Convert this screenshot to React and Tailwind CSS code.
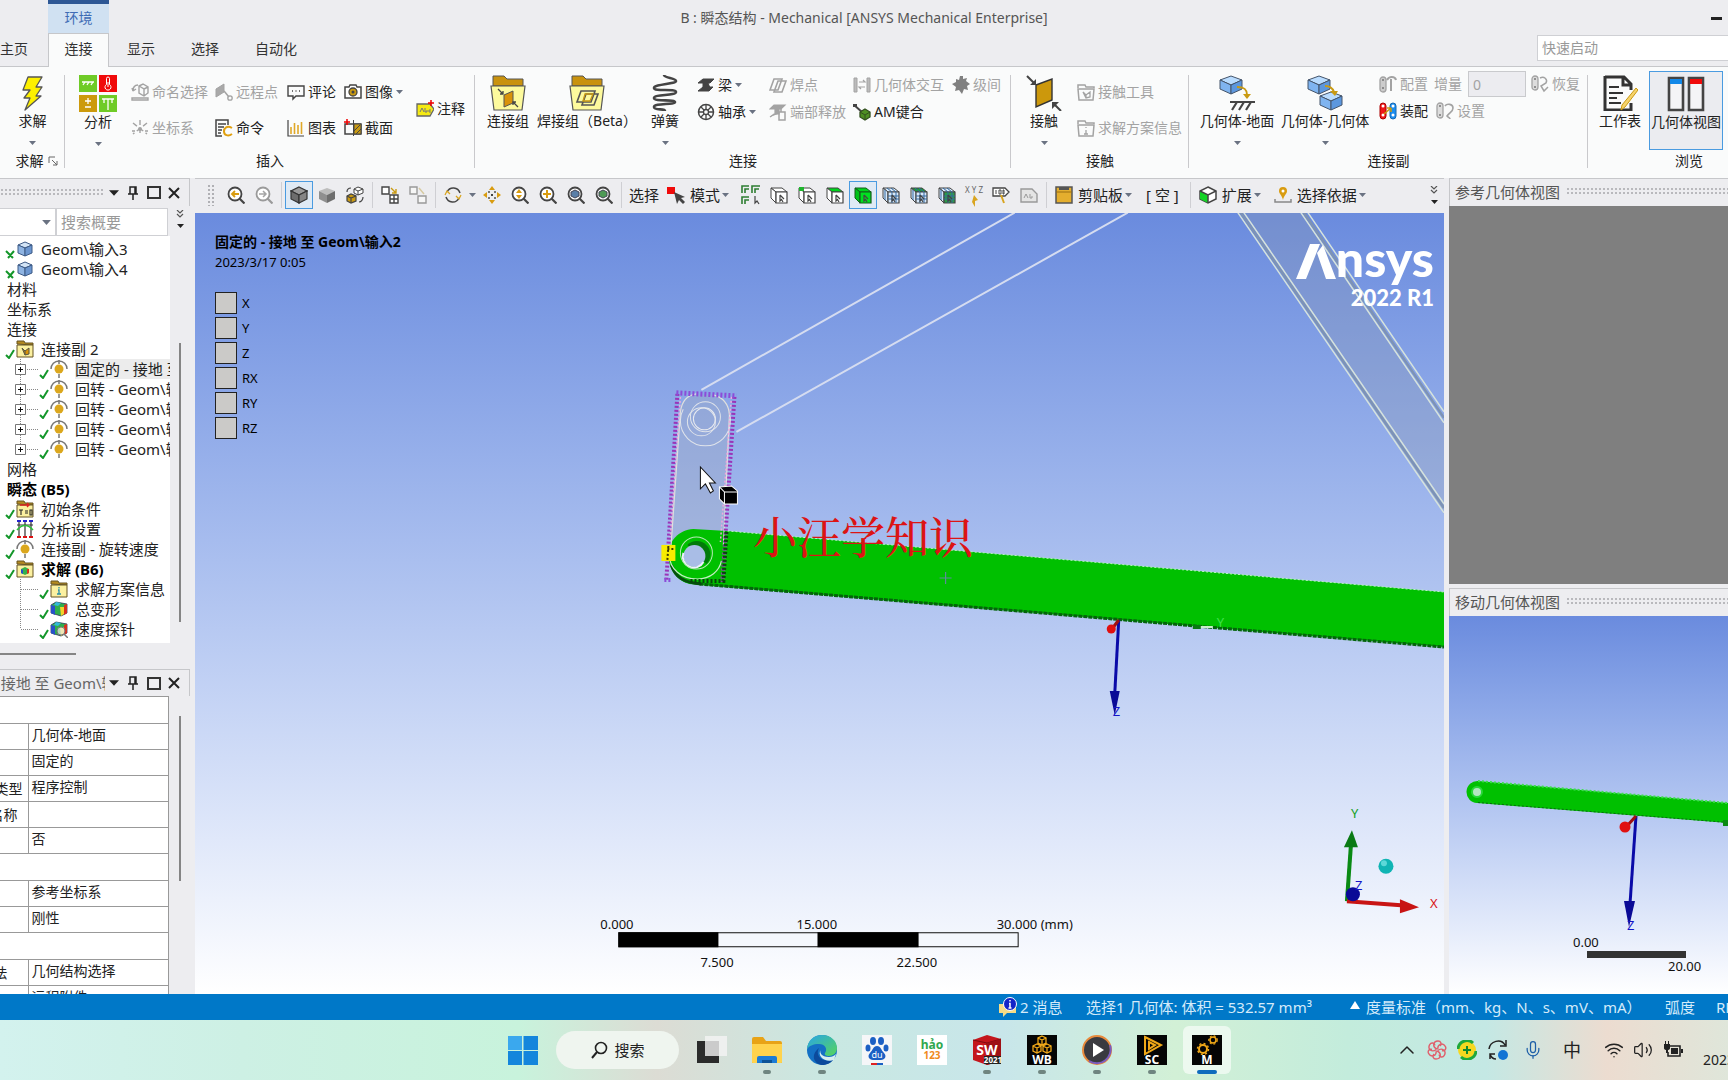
import React, { useState } from 'react';
import clsx from 'clsx';
import { ChevronUp, Mic, Wifi, Volume2 } from 'lucide-react';

const DARK = '#444444';
const GREY = '#a3a3a3';
const GOLD = '#c99a12';

const Svg = ({ size = 18, box = 18, children, className }) => (
  <svg width={size} height={size} viewBox={`0 0 ${box} ${box}`} fill="none" className={clsx('shrink-0', className)} aria-hidden="true">
    {children}
  </svg>
);

const Caret = ({ className }) => (
  <svg width="7" height="4" viewBox="0 0 7 4" className={clsx('shrink-0', className)} aria-hidden="true">
    <path d="M0 0h7L3.5 4z" fill="currentColor" />
  </svg>
);

/* ---------- large ribbon icons (36 x 36) ---------- */

const SolveIcon = () => (
  <Svg size={36} box={36}>
    <path d="M13 2h14l-6 10h6l-6 9h5L10 35l5-12h-6l6-8H8z" fill="#fdf000" stroke="#555" strokeWidth="1.3" strokeLinejoin="round" />
  </Svg>
);

const AnalysisIcon = () => (
  <svg width="38" height="37" viewBox="0 0 38 37" fill="none" aria-hidden="true">
    <rect width="18" height="17" fill="#6fcb27" />
    <rect x="20" width="18" height="17" fill="#f00a0a" />
    <rect y="20" width="18" height="17" fill="#cc9a0c" />
    <rect x="20" y="20" width="18" height="17" fill="#6fcb27" />
    <path d="M3 7h12M4 10l2-3M8 10l2-3M12 10l2-3M9 23v6M6 26h6M6 32h6M29 24v11M23 24h12M25 24v4M33 24v4" stroke="#fff" strokeWidth="1.3" />
    <path d="M27.500 3.500a1.500 1.500 0 0 1 3 0v6a3 3 0 1 1-3 0z" stroke="#fff" />
    <path d="M29 7v5" stroke="#fff" />
  </svg>
);

const FolderBase = ({ children }) => (
  <Svg size={36} box={36}>
    <path d="M3 11V1h11l3 3h16v7z" fill="#c9920e" stroke="#555" strokeWidth="1" />
    <path d="M1 11h34l-3 24H4z" fill="#fdfa9d" stroke="#555" strokeWidth="1.2" />
    {children}
  </Svg>
);

const ConnGroupIcon = () => (
  <FolderBase>
    <path d="M14 20l9-4v12l-9 4z" fill="#d9930a" stroke="#555" />
    <path d="M8 14l5 5m0-3v3h-3M28 32l-5-5m0 3v-3h3" stroke="#444" strokeWidth="1.3" />
  </FolderBase>
);

const WeldGroupIcon = () => (
  <FolderBase>
    <path d="M12 16h14l-4 11H8zM17 19h12l-4 11H13z" stroke="#555" strokeWidth="1.6" />
    <path d="M16 19h8l-3 7h-7z" stroke={GOLD} strokeWidth="1.3" />
  </FolderBase>
);

const SpringIcon = () => (
  <Svg size={36} box={36}>
    <path d="M17 0c0 3 12 3 12 6S7 9 7 13s22 0 22 4-22 2-22 6 21 1 21 4-21 1-21 5 11 1 11 4" stroke={DARK} strokeWidth="2.6" strokeLinecap="round" />
  </Svg>
);

const ContactIcon = () => (
  <Svg size={36} box={36}>
    <path d="M10 10l16-6v21l-16 7z" fill="#cc980c" stroke="#333" strokeWidth="1.4" />
    <path d="M1 1l8 8M35 36l-8-8" stroke={DARK} strokeWidth="2" />
    <path d="M10 10V4L4 10zM26 27v7l7-7z" fill={DARK} />
  </Svg>
);

const BlueCube = ({ x, y }) => (
  <g transform={`translate(${x} ${y})`} stroke="#44546a" strokeWidth="1" strokeLinejoin="round">
    <path d="M11 0l11 4-11 5L0 4z" fill="#b9dcff" />
    <path d="M0 4l11 5v9L0 13z" fill="#7fb4f0" />
    <path d="M22 4L11 9v9l11-5z" fill="#5c97de" />
  </g>
);

const BodyGroundIcon = () => (
  <Svg size={36} box={36}>
    <BlueCube x={1} y={1} />
    <path d="M18 12c8 0 10 3 10 8" stroke={GOLD} strokeWidth="2" />
    <path d="M24 19h8l-4 5z" fill={GOLD} />
    <path d="M11 27h25M18 27l-5 8M25 27l-5 8M32 27l-5 8" stroke={DARK} strokeWidth="2.2" />
  </Svg>
);

const BodyBodyIcon = () => (
  <Svg size={36} box={36}>
    <BlueCube x={1} y={1} />
    <BlueCube x={13} y={17} />
    <path d="M18 11c6 0 8 3 9 6" stroke={GOLD} strokeWidth="2" />
    <path d="M23 16h8l-3 5z" fill={GOLD} />
  </Svg>
);

const WorksheetIcon = () => (
  <Svg size={36} box={36}>
    <path d="M3 2h19l7 7v6M3 1v34h26v-7M21 2v8h8" stroke="#333" strokeWidth="3" />
    <path d="M7 12h10M7 18h14M7 23h8M7 28h12" stroke="#333" strokeWidth="2" />
    <path d="M34 13l2 2-13 17-4 3 1-5z" fill="#f6d36b" stroke={GOLD} />
  </Svg>
);

const BodyViewIcon = () => (
  <svg width="38" height="36" viewBox="0 0 38 36" fill="none" aria-hidden="true">
    <path d="M2 2h14v32H2zM22 2h14v32H22z" fill="#f4f4f6" stroke={DARK} strokeWidth="2.600" />
    <path d="M3 3h12v5H3z" fill="#1288e8" />
    <path d="M23 3h12v5H23z" fill="#f00a0a" />
  </svg>
);

/* ---------- small ribbon icons (18 x 18) ---------- */

const small = {
  named: <Svg><path d="M1 15h16v2H1zM2 8c0-4 2-6 5-6M2 8l-1-3M2 8l3-2" stroke={GREY} strokeWidth="1.400" /><path d="M8 3l4-2 5 3v6l-4 3-5-3z M8 3l5 3v7M13 6l4-2" stroke={GREY} strokeWidth="1.400" /></Svg>,
  csys: <Svg><path d="M9 1v16M2 4l14 11M16 4L2 15M1 12h3M14 12h3" stroke={GREY} strokeWidth="1.400" strokeDasharray="5 3" /><circle cx="9" cy="10" r="2" fill={GREY} /></Svg>,
  remote: <Svg><path d="M1 6l8-5v8l-8 5z" fill="#a9a9a9" stroke={GREY} /><path d="M9 8l5 6" stroke={GREY} strokeWidth="1.500" /><circle cx="15" cy="15" r="2.200" stroke={GREY} strokeWidth="1.300" /></Svg>,
  commands: <Svg><path d="M13 6V1H1v16h6" stroke={DARK} strokeWidth="1.500" /><path d="M3 5h8M3 8h6M3 11h4M3 14h3" stroke={DARK} strokeWidth="1.300" /><path d="M17 9c-5-3-8 0-8 3.500S13 18 17 15" stroke="#e0a010" strokeWidth="2" /></Svg>,
  comment: <Svg><path d="M1 3h16v10H9l-3 3v-3H1z" stroke={DARK} strokeWidth="1.400" /><path d="M5 8h1M8.500 8h1M12 8h1" stroke={DARK} strokeWidth="1.400" /></Svg>,
  chart: <Svg><path d="M1 1v16h16" stroke={DARK} strokeWidth="1.200" /><path d="M4 15V8M7.500 15V4M11 15V6M14.500 15V3" stroke="#e0a828" strokeWidth="1.600" /></Svg>,
  image: <Svg><path d="M1 4h4l1-2h6l1 2h4v11H1z" fill="#fff" stroke={DARK} strokeWidth="1.500" /><circle cx="9" cy="9" r="4" fill={GOLD} stroke={DARK} strokeWidth="1.300" /><circle cx="9" cy="9" r="1.500" fill={DARK} /></Svg>,
  section: <Svg><path d="M1 5h16v10H1z" stroke={DARK} strokeWidth="1.500" /><path d="M10 5h7v10h-7z" fill={GOLD} stroke={DARK} /><path d="M10 12l6-6M12 15l5-5" stroke={DARK} /><path d="M9.500 1v16" stroke={DARK} /><path d="M0 3h6M3 0v6" stroke="#e00" strokeWidth="1.500" /></Svg>,
  note: <Svg><path d="M1 4h13l4 5-4 7H1z" fill="#f5ea12" stroke="#666" strokeWidth="1.300" /><path d="M4 12l2-4 2 4M9 8v4h2v-2M15 10h-2v2h2" stroke="#777" /><path d="M12 3h6M15 0v6" stroke="#e00" strokeWidth="1.500" /></Svg>,
  beam: <Svg><path d="M1 7l5-4h11l-4 4zM1 15l5-4h10l-4 4zM6 7h5l2 5-7 0z" fill={DARK} stroke={DARK} /></Svg>,
  bearing: <Svg><circle cx="9" cy="9" r="7.500" stroke={DARK} strokeWidth="1.500" /><circle cx="9" cy="9" r="2.500" stroke={DARK} strokeWidth="1.300" /><path d="M9 1.500v5M9 11.500v5M1.500 9h5M11.500 9h5M4 4l3 3M11 11l3 3M14 4l-3 3M4 14l3-3" stroke={DARK} strokeWidth="1.300" /></Svg>,
  weld: <Svg><path d="M5 3h8l-4 11H1zM9 5h8l-4 11H5z" stroke={GREY} strokeWidth="1.600" /></Svg>,
  release: <Svg><path d="M1 6l4-4h11l-4 4zM1 14l4-3h4M6 6h4v5H6z" fill={GREY} stroke={GREY} strokeWidth="1.200" /><path d="M10 9h6v8h-6zM12 6v3" stroke={GREY} strokeWidth="1.500" /></Svg>,
  interact: <Svg><path d="M1 2h3v14H1zM14 2h3v14h-3z" fill="#bbb" stroke={GREY} /><path d="M6 6h6l-2-2M12 11H6l2 2" stroke={GREY} strokeWidth="1.200" /></Svg>,
  bond: <Svg><path d="M1 2l8 7" stroke={DARK} strokeWidth="2" /><path d="M0 1h4v3H0z" fill={DARK} /><path d="M12 6l5 3v5l-5 3-5-3V9z" fill="#4e8f22" stroke="#33501f" strokeWidth="1.300" /><path d="M7 9l5 3 5-3M12 12v5" stroke="#33501f" /></Svg>,
  stage: <Svg><path d="M8 0h3v3l4-1-1 3 4 3-3 2 1 4-4-1-2 5-3-4-4 1 1-4-4-3 4-2V3l3 1z" fill="#808080" /></Svg>,
  contactTool: <Svg><path d="M1 5V2h7l1 2h8v1M1 6h16l-1 11H2z" stroke={GREY} strokeWidth="1.500" /><path d="M6 9l3 3 4-3v5l-4 1zM9 12v3" stroke={GREY} strokeWidth="1.300" /></Svg>,
  solInfo: <Svg><path d="M1 5V2h7l1 2h8v1M1 6h16l-1 11H2z" stroke={GREY} strokeWidth="1.500" /><path d="M9 8v1M9 11v4M7 15h4" stroke={GREY} strokeWidth="1.300" /></Svg>,
  configure: <Svg><rect x="1" y="2" width="6" height="15" rx="3" fill="#ccc" stroke={GREY} strokeWidth="1.300" /><circle cx="4" cy="5" r="1" fill="#777" /><circle cx="4" cy="13" r="1" fill="#777" /><path d="M8 5c2-4 8-4 9 0M12 4v12" stroke={GREY} strokeWidth="2" /></Svg>,
  revert: <Svg><rect x="1" y="1" width="6" height="14" rx="3" fill="#ddd" stroke={GREY} strokeWidth="1.300" /><circle cx="4" cy="4" r="1" fill="#777" /><circle cx="4" cy="12" r="1" fill="#777" /><path d="M9 3c4-2 8 1 6 5l-5 3 3 5 4-4" stroke={GREY} strokeWidth="1.500" /></Svg>,
  assemble: <Svg><rect x="1" y="1" width="6" height="16" rx="3" fill="#f01818" stroke="#a00" /><rect x="11" y="1" width="6" height="16" rx="3" fill="#1b8df0" stroke="#1469b4" /><circle cx="4" cy="4" r="1.500" fill="#fff" /><circle cx="4" cy="13" r="1.500" fill="#fff" /><circle cx="14" cy="4" r="1.500" fill="#fff" /><circle cx="14" cy="13" r="1.500" fill="#fff" /><path d="M5 12l7-6M12 6H8M12 6v4" stroke={GOLD} strokeWidth="1.600" /></Svg>,
  set: <Svg><rect x="1" y="1" width="6" height="15" rx="3" fill="#ddd" stroke={GREY} strokeWidth="1.300" /><circle cx="4" cy="4" r="1" fill="#777" /><circle cx="4" cy="13" r="1" fill="#777" /><path d="M9 4c2-3 8-2 8 2s-3 4-6 8c2 2 3 2 3 3" stroke={GREY} strokeWidth="1.600" /></Svg>,
};

/* ---------- graphics toolbar icons ---------- */

const Lens = ({ color = DARK, children }) => (
  <Svg>
    <circle cx="8" cy="8" r="6.500" fill="#fff" stroke={color} strokeWidth="1.800" />
    <path d="M12.500 12.500l5 5" stroke={color} strokeWidth="2.200" />
    {children}
  </Svg>
);

const PickCube = ({ top = '#fff', front = '#fff', side = '#fff', corner, grid, stroke = DARK }) => (
  <Svg>
    <path d="M1 2h11l5 4H6z" fill={top} stroke={stroke} strokeLinejoin="round" />
    <path d="M1 2v10l5 5V6z" fill={side} stroke={stroke} strokeLinejoin="round" />
    <path d="M6 6h11v11H6z" fill={front} stroke={stroke} strokeWidth="1.200" />
    {grid && <path d="M10 6v11M14 6v11M6 10h11M6 13h11M3 4v10M5 2l5 4M9 2l5 4" stroke="#34689e" />}
    {corner && <path d="M1 1h5v4H1z" fill="#1fb52e" />}
    <path d="M10 9v6l1.500-1.500L13 16M10 9l4 4" stroke={DARK} strokeWidth="1.200" />
  </Svg>
);

const tools = {
  back: <Lens><path d="M12 8H5M8 5L5 8l3 3" stroke="#d99c10" strokeWidth="1.800" /></Lens>,
  forward: <Lens color="#9a9a9a"><path d="M4 8h7M8 5l3 3-3 3" stroke="#a5a5a5" strokeWidth="1.500" /></Lens>,
  cube: <Svg><path d="M9 1l8 4-8 4-8-4z" fill="#999" stroke="#333" strokeWidth="1.200" /><path d="M1 5l8 4v8l-8-4z" fill="#6d6d6d" stroke="#333" strokeWidth="1.200" /><path d="M17 5L9 9v8l8-4z" fill="#858585" stroke="#333" strokeWidth="1.200" /></Svg>,
  solid: <Svg><path d="M9 2l8 3-8 4-8-4z" fill="#bdbdbd" /><path d="M1 5l8 4v8l-8-4z" fill="#8f8f8f" /><path d="M17 5L9 9v8l8-4z" fill="#6e6e6e" /></Svg>,
  swap: <Svg><path d="M8 3l4-2 5 2v4l-5 2-4-2zM8 3l4 2v4M12 5l5-2" stroke={DARK} fill="#fff" /><path d="M1 10l4-2 5 2v5l-5 2-4-2z" fill={GOLD} stroke={DARK} strokeWidth="1.200" /><path d="M1 10l4 2v5M5 12l5-2M1 6c0-3 2-4 4-4M17 11c0 3-2 5-4 5" stroke={DARK} strokeWidth="1.200" /></Svg>,
  expand: <Svg><path d="M1 1h7v7H1zM9 9h8v8H9zM13 9v8M9 13h8" stroke={DARK} strokeWidth="1.400" fill="#fff" /><path d="M10 2l5 5M15 3v4h-4" stroke={GOLD} strokeWidth="1.400" /></Svg>,
  collapse: <Svg><path d="M1 1h7v7H1zM9 10h8v7H9z" stroke="#999" strokeWidth="1.400" fill="#f6f6f6" /><path d="M10 2l5 6" stroke="#d6c9a0" strokeWidth="1.400" /></Svg>,
  rotate: <Svg><path d="M3 6c3-6 11-5 13 1M15 12c-3 6-11 5-13-1" stroke={DARK} strokeWidth="1.500" /><path d="M1 9l2-4 3 3M17 9l-2 4-3-3" stroke="#d9a520" strokeWidth="1.300" /></Svg>,
  pan: <Svg><path d="M9 0l3 4H6zM9 18l3-4H6zM0 9l4-3v6zM18 9l-4-3v6z" fill="#d99c10" /><path d="M8 8h2v2H8z" fill={DARK} /><path d="M5 5h2v2H5zM11 5h2v2h-2zM5 11h2v2H5zM11 11h2v2h-2z" fill="#777" /></Svg>,
  zoom: <Lens><path d="M8 3l3 4H5zM8 13l3-4H5z" fill="#d99c10" /></Lens>,
  zoomIn: <Lens><path d="M4 8h8M8 4v8" stroke="#d99c10" strokeWidth="2" /></Lens>,
  zoomFit: <Lens><path d="M8 4l4 2v4l-4 2-4-2V6z" fill="#5a7fa8" stroke="#445" /></Lens>,
  zoomSel: <Lens><path d="M8 4l4 2v4l-4 2-4-2V6z" fill="#4e9a55" stroke="#445" /></Lens>,
  mode: <Svg><path d="M0 1h8v7H0z" fill="#f00a0a" /><path d="M7 6l11 5-4 1 4 4-2 2-4-4-2 4z" fill={DARK} /></Svg>,
  pickType: <Svg size={20} box={20}><path d="M1 8V1h7M4 8V4h4M11 8V1h8M14 8V4h4M1 19v-7h7M4 19v-4h4" stroke="#2e7d32" strokeWidth="1.600" /><path d="M14 11v7l2-2 2 3" stroke={DARK} strokeWidth="1.200" /></Svg>,
  vertex: <PickCube />,
  edge: <PickCube corner />,
  face: <PickCube top="#00d41c" />,
  body: <PickCube top="#00d41c" front="#00e020" side="#00c31a" stroke="#135c1a" />,
  node: <PickCube front="#d6e8fa" side="#d6e8fa" top="#d6e8fa" grid />,
  elemFace: <PickCube front="#d6e8fa" side="#d6e8fa" top="#1f9a3a" grid />,
  elem: <PickCube front="#2c9a4a" side="#d6e8fa" top="#d6e8fa" grid />,
  tag: <Svg><path d="M1 2h12l4 4-4 4H1z" fill="#fff" stroke={DARK} strokeWidth="1.300" /><path d="M4 4v4M7 4h2v4H7zM11 4h1v4h-1z" stroke={DARK} /><path d="M9 9l3 8" stroke="#d9a520" strokeWidth="2" /></Svg>,
  label: <Svg><path d="M1 3h11l5 5v8H1z" fill="#e4e4e4" stroke="#999" strokeWidth="1.400" /><path d="M4 12l2-4 2 4M10 8v4h2v-2" stroke="#999" /></Svg>,
  clipboard: <Svg><path d="M1 1h16v16H1z" fill="#e4ae2e" stroke="#555" strokeWidth="1.500" /><path d="M4 1h10v3H4z" fill="#555" /><path d="M1 6h16" stroke="#9a6f10" /></Svg>,
  extend: <Svg><path d="M9 1l8 4v8l-8 4-8-4V5z" fill="#fff" stroke={DARK} strokeWidth="1.500" /><path d="M1 5l8 4v8l-8-4z" fill="#14d326" /><path d="M1 5l8 4 8-4M9 9v8" stroke={DARK} strokeWidth="1.500" /></Svg>,
  pin: <Svg><path d="M9 1a4 4 0 0 1 4 4c0 3-3 4-4 9-1-5-4-6-4-9a4 4 0 0 1 4-4z" fill="#d99c10" /><circle cx="9" cy="5" r="1.500" fill="#fff" /><path d="M1 13v3h16v-3" stroke="#888" strokeWidth="1.500" /></Svg>,
};

/* ---------- ribbon ---------- */

const BigButton = ({ icon, label, width, caret, disabled, active }) => (
  <button
    type="button"
    disabled={disabled}
    className={clsx('flex flex-col items-center shrink-0 whitespace-nowrap', width, active ? 'mt-1 h-[79px] border border-[#4a9be0] bg-[#ebecf0] pt-1' : 'pt-2')}
  >
    {icon}
    <span className="leading-5">{label}</span>
    {caret && <Caret className="mt-[10px] text-gray-500" />}
  </button>
);

const SmallButton = ({ icon, label, disabled, caret }) => (
  <button type="button" disabled={disabled} className={clsx('flex items-center gap-[3px] h-5 leading-5 whitespace-nowrap', disabled && 'text-[#a3a3a3]')}>
    {icon}
    {label}
    {caret && <Caret className="text-gray-500" />}
  </button>
);

const RibbonGroup = ({ label, width, launcher, children }) => (
  <section className={clsx('relative flex flex-col shrink-0', width)}>
    <div className="flex flex-1">{children}</div>
    <div className="h-5 mb-[7px] leading-5 flex justify-center items-center">
      {label}
      {launcher && (
        <Svg size={10} box={10} className="ml-1 -mr-2">
          <path d="M1 7V1h6M4 4l5 5M9 5v4H5" stroke="#666" />
        </Svg>
      )}
    </div>
    <span className="absolute right-0 top-2 bottom-[10px] w-px bg-[#c9c9cc]" />
  </section>
);

const Ribbon = () => (
  <div className="flex h-[112px] bg-[#fafbfb] border-t border-[#c6c7ca] text-sm overflow-hidden shrink-0">
    <RibbonGroup label="求解" width="w-[65px]" launcher>
      <BigButton icon={<SolveIcon />} label="求解" width="w-[65px]" caret />
    </RibbonGroup>
    <RibbonGroup label="插入" width="w-[410px]">
      <BigButton icon={<AnalysisIcon />} label="分析" width="w-[66px]" caret />
      <div className="flex flex-col gap-4 pt-[15px] w-[84px]">
        <SmallButton icon={small.named} label="命名选择" disabled />
        <SmallButton icon={small.csys} label="坐标系" disabled />
      </div>
      <div className="flex flex-col gap-4 pt-[15px] w-[72px]">
        <SmallButton icon={small.remote} label="远程点" disabled />
        <SmallButton icon={small.commands} label="命令" />
      </div>
      <div className="flex flex-col gap-4 pt-[15px] w-[57px]">
        <SmallButton icon={small.comment} label="评论" />
        <SmallButton icon={small.chart} label="图表" />
      </div>
      <div className="flex flex-col gap-4 pt-[15px] w-[72px]">
        <SmallButton icon={small.image} label="图像" caret />
        <SmallButton icon={small.section} label="截面" />
      </div>
      <div className="pt-8">
        <SmallButton icon={small.note} label="注释" />
      </div>
    </RibbonGroup>
    <RibbonGroup label="连接" width="w-[536px]">
      <BigButton icon={<ConnGroupIcon />} label="连接组" width="w-[66px]" />
      <BigButton icon={<WeldGroupIcon />} label="焊接组（Beta）" width="w-[92px]" />
      <BigButton icon={<SpringIcon />} label="弹簧" width="w-[64px]" caret />
      <div className="flex flex-col gap-[7px] pt-2 w-[72px]">
        <SmallButton icon={small.beam} label="梁" caret />
        <SmallButton icon={small.bearing} label="轴承" caret />
      </div>
      <div className="flex flex-col gap-[7px] pt-2 w-[84px]">
        <SmallButton icon={small.weld} label="焊点" disabled />
        <SmallButton icon={small.release} label="端部释放" disabled />
      </div>
      <div className="flex flex-col gap-[7px] pt-2 w-[99px]">
        <SmallButton icon={small.interact} label="几何体交互" disabled />
        <SmallButton icon={small.bond} label="AM键合" />
      </div>
      <div className="pt-2">
        <SmallButton icon={small.stage} label="级间" disabled />
      </div>
    </RibbonGroup>
    <RibbonGroup label="接触" width="w-[178px]">
      <BigButton icon={<ContactIcon />} label="接触" width="w-[66px]" caret />
      <div className="flex flex-col gap-4 pt-[15px]">
        <SmallButton icon={small.contactTool} label="接触工具" disabled />
        <SmallButton icon={small.solInfo} label="求解方案信息" disabled />
      </div>
    </RibbonGroup>
    <RibbonGroup label="连接副" width="w-[399px]">
      <div className="flex pl-1 pr-[10px]">
        <BigButton icon={<BodyGroundIcon />} label="几何体-地面" width="w-[88px]" caret />
        <BigButton icon={<BodyBodyIcon />} label="几何体-几何体" width="w-[88px]" caret />
      </div>
      <div className="flex flex-col gap-px pt-1">
        <div className="flex items-center h-[26px]">
          <SmallButton icon={small.configure} label="配置" disabled />
          <label htmlFor="increment" className="ml-[6px] mr-[6px] leading-5 text-[#a3a3a3]">增量</label>
          <input id="increment" defaultValue="0" disabled className="w-[58px] h-[26px] pl-1 mr-[5px] bg-[#ececf0] border border-[#c9cacd] text-[#a3a3a3]" />
          <SmallButton icon={small.revert} label="恢复" disabled />
        </div>
        <div className="flex items-center h-[26px] gap-2">
          <SmallButton icon={small.assemble} label="装配" />
          <SmallButton icon={small.set} label="设置" disabled />
        </div>
      </div>
    </RibbonGroup>
    <RibbonGroup label="浏览" width="w-[202px]">
      <div className="flex pl-[3px]">
        <BigButton icon={<WorksheetIcon />} label="工作表" width="w-[58px]" />
        <BigButton icon={<BodyViewIcon />} label="几何体视图" width="w-[74px]" active />
      </div>
    </RibbonGroup>
  </div>
);

const TitleBar = () => (
  <header className="relative bg-[#ededf0] shrink-0 text-sm text-[#333]">
    <div className="flex h-[33px]">
      <span className="ml-12 w-[61px] border-t-4 border-[#2d5795] bg-[#d0e1f2] text-[#3f6cb5] text-center leading-7">环境</span>
      <h1 className="absolute inset-x-0 top-2 text-center leading-5 text-[#555]">B : 瞬态结构 - Mechanical [ANSYS Mechanical Enterprise]</h1>
      <button type="button" aria-label="最小化" className="ml-auto mr-[6px] mt-1 self-center w-[11px] h-[3px] bg-[#222]" />
    </div>
    <nav className="flex h-[33px] leading-8">
      <a href="#home" className="w-12">主页</a>
      <a href="#connect" className="w-[61px] -mb-px relative z-10 text-center leading-[30px] bg-[#fafbfb] border border-b-0 border-[#c6c7ca]">连接</a>
      <a href="#display" className="w-[64px] text-center">显示</a>
      <a href="#select" className="w-[64px] text-center">选择</a>
      <a href="#auto" className="w-[78px] text-center">自动化</a>
      <input aria-label="快速启动" placeholder="快速启动" className="ml-auto mt-[2px] w-[191px] h-[26px] pl-1 bg-white border border-r-0 border-[#cfd0d4] placeholder:text-[#999]" />
    </nav>
  </header>
);

/* ---------- docked panels ---------- */

const Dots = () => (
  <span className="flex-1 h-[9px] bg-[radial-gradient(#b9b9bd_1px,transparent_1px)] bg-[size:4px_4px]" />
);

const PanelControls = () => (
  <div className="flex items-center gap-[7px] text-[#222]">
    <button type="button" aria-label="菜单"><Caret className="w-[10px] h-[6px]" /></button>
    <button type="button" aria-label="固定">
      <Svg size={14} box={14}><path d="M4 1h6v7H4zM9 1v7M2 8h10M7 8v6" stroke="#222" strokeWidth="1.500" /></Svg>
    </button>
    <button type="button" aria-label="最大化" className="w-[14px] h-[13px] border-2 border-[#333]" />
    <button type="button" aria-label="关闭">
      <Svg size={12} box={12}><path d="M1 1l10 10M11 1L1 11" stroke="#222" strokeWidth="2" /></Svg>
    </button>
  </div>
);

const Overflow = () => (
  <div className="flex flex-col items-center gap-[6px]">
    <Svg size={8} box={8}><path d="M1 0l3 3 3-3M1 4l3 3 3-3" stroke="#555" strokeWidth="1.200" /></Svg>
    <Caret className="text-[#222]" />
  </div>
);

const TreeIcon = ({ kind }) => {
  if (kind === 'cube') {
    return <Svg><path d="M9 2l7 3-7 3-7-3z" fill="#d3e4f6" stroke="#3d5a85" /><path d="M2 5l7 3v8l-7-3z" fill="#8fb4e2" stroke="#3d5a85" /><path d="M16 5L9 8v8l7-3z" fill="#6b95cf" stroke="#3d5a85" /></Svg>;
  }
  if (kind === 'joint') {
    return <Svg><path d="M1 9a8 8 0 0 1 16 0" stroke="#777" strokeWidth="1.500" /><circle cx="9" cy="9" r="4.500" fill="#dba71d" /><path d="M9 0v4M9 14v4" stroke="#777" strokeWidth="1.500" /></Svg>;
  }
  if (kind === 'settings') {
    return <Svg><path d="M3 1v15M9 1v15M15 1v15M1 5h16" stroke="#333" strokeWidth="1.200" /><path d="M1 1h4M7 1h4M13 1h4" stroke="#2222cc" strokeWidth="2" /><path d="M1 10c5-6 11-6 16 0" stroke="#2dbf3a" strokeWidth="1.500" /><path d="M1 17h4M7 17h4M13 17h4" stroke="#d11" strokeWidth="2" /></Svg>;
  }
  if (kind === 'result' || kind === 'probe') {
    return (
      <Svg>
        <path d="M1 5l5-3 11 2v9l-6 3-10-3z" fill="#2fae4d" stroke="#335" strokeWidth=".8" />
        <path d="M1 5l4 1v9l-4-2z" fill="#2850c8" />
        <path d="M6 2l5 1-3 3-4-1z" fill="#33b8d8" />
        <path d="M10 7l4 0v7l-3 2z" fill="#f3d22a" />
        <path d="M14 5l3-1v9l-3 2z" fill="#d8301e" />
        {kind === 'probe' && <><circle cx="11" cy="11" r="4" fill="#eee" fillOpacity=".7" stroke="#777" /><path d="M14 14l4 4" stroke="#777" strokeWidth="1.500" /></>}
      </Svg>
    );
  }
  return (
    <Svg>
      <path d="M1 4V1h7l1 2h8v2z" fill="#b58a20" stroke="#665522" />
      <path d="M1 5h16v12H1z" fill="#fbf0a0" stroke="#665522" />
      {kind === 'group' && <path d="M6 8l3 3 4-3v6l-4 1zM9 11v4" fill="#d9930a" stroke="#554" />}
      {kind === 'initial' && <><path d="M4 5h9M11 3l2 2-2 2" stroke="#d22" strokeWidth="1.300" /><path d="M3 10h4M5 10v5M9 11h3M9 13h3M14 10h2v5h-2z" stroke="#222" strokeWidth="1.100" /></>}
      {kind === 'solution' && <><path d="M5 9l4-2 4 2v4l-4 2-4-2z" fill="#35b24a" /><path d="M5 9l2 1v4l-2-1z" fill="#2850c8" /><path d="M11 9l2 0v4l-2 1z" fill="#d8301e" /></>}
      {kind === 'info' && <path d="M9 7v1.500M8 10h1v4M7 14h4" stroke="#2a8fa8" strokeWidth="1.300" />}
    </Svg>
  );
};

const Tick = ({ cross }) => (
  <Svg size={10} box={10} className="self-end">
    <path d={cross ? 'M1 2l3 3M9 2L3 9M4 5l4 4' : 'M1 6l3 3 5-8'} stroke="#14962a" strokeWidth="2" />
  </Svg>
);

const Branch = ({ plus, last }) => (
  <svg width="39" height="20" viewBox="0 0 39 20" fill="none" className="shrink-0" aria-hidden="true">
    <path d={last ? 'M20.500 0v10M21 10.500h18' : 'M20.500 0v20M21 10.500h18'} stroke="#888" strokeDasharray="1 1" />
    {plus && <><path d="M15.500 5.500h10v10h-10z" fill="#fff" stroke="#777" /><path d="M18 10.500h5M20.500 8v5" stroke="#111" /></>}
  </svg>
);

const treeRows = [
  { depth: 1, icon: 'cube', text: 'Geom\\输入3', cross: true },
  { depth: 1, icon: 'cube', text: 'Geom\\输入4', cross: true },
  { depth: 0, text: '材料' },
  { depth: 0, text: '坐标系' },
  { depth: 0, text: '连接' },
  { depth: 1, icon: 'group', text: '连接副 2' },
  { depth: 2, icon: 'joint', text: '固定的 - 接地 至 Geom\\输入2', plus: true, selected: true },
  { depth: 2, icon: 'joint', text: '回转 - Geom\\输入2', plus: true },
  { depth: 2, icon: 'joint', text: '回转 - Geom\\输入3', plus: true },
  { depth: 2, icon: 'joint', text: '回转 - Geom\\输入4', plus: true },
  { depth: 2, icon: 'joint', text: '回转 - Geom\\输入4', plus: true, last: true },
  { depth: 0, text: '网格' },
  { depth: 0, text: '瞬态 (B5)', bold: true },
  { depth: 1, icon: 'initial', text: '初始条件' },
  { depth: 1, icon: 'settings', text: '分析设置' },
  { depth: 1, icon: 'joint', text: '连接副 - 旋转速度' },
  { depth: 1, icon: 'solution', text: '求解 (B6)', bold: true },
  { depth: 2, icon: 'info', text: '求解方案信息' },
  { depth: 2, icon: 'result', text: '总变形' },
  { depth: 2, icon: 'probe', text: '速度探针', last: true },
];

const TreeRow = ({ row }) => (
  <li className={clsx('flex items-center h-5 leading-5 whitespace-nowrap text-[#222]', row.bold && 'font-bold text-black', row.depth === 0 && 'pl-[7px]', row.depth === 1 && 'pl-[5px]')}>
    {row.depth === 2 && <Branch plus={row.plus} last={row.last} />}
    {row.depth > 0 && <Tick cross={row.cross} />}
    {row.icon && <span className="ml-px mr-[7px]"><TreeIcon kind={row.icon} /></span>}
    <span className={clsx(row.selected && 'bg-[#ececec]')}>{row.text}</span>
  </li>
);

const detailRows = [
  { section: true },
  { name: '', value: '几何体-地面' },
  { name: '', value: '固定的' },
  { name: '类型', value: '程序控制' },
  { name: '名称', value: '', cut: true },
  { name: '', value: '否' },
  { section: true },
  { name: '', value: '参考坐标系' },
  { name: '', value: '刚性' },
  { section: true },
  { name: '法', value: '几何结构选择', wide: true },
  { name: '', value: '远程附件' },
];

const LeftDock = () => (
  <aside className="flex flex-col w-[195px] shrink-0 min-h-0 bg-[#ededf0]">
    <div className="flex items-center h-[28px] gap-1 pr-[9px] mr-[5px] border-t border-r border-[#c6c7ca] shrink-0">
      <Dots />
      <PanelControls />
    </div>
    <div className="flex h-[30px] pt-[2px] shrink-0">
      <select aria-label="筛选" className="w-[56px] h-7 bg-white border border-l-0 border-[#cfd0d4] appearance-none" />
      <Caret className="-ml-[14px] mr-[5px] mt-3 w-[9px] h-[5px] text-gray-500 relative" />
      <input aria-label="搜索概要" placeholder="搜索概要" className="w-[112px] h-7 pl-1 text-[15px] bg-white border border-[#cfd0d4] placeholder:text-[#999]" />
      <div className="ml-2 pt-[2px]"><Overflow /></div>
    </div>
    <div className="flex shrink-0">
      <ul className="w-[170px] h-[407px] py-[3px] bg-white overflow-hidden text-[15px]">
        {treeRows.map((row, i) => <TreeRow key={i} row={row} />)}
      </ul>
      <span className="w-[2px] h-[279px] mt-[107px] ml-[9px] bg-[#858585]" />
    </div>
    <span className="w-[76px] h-[2px] mt-[10px] bg-[#858585] shrink-0" />
    <div className="flex items-center justify-end h-[27px] mt-[14px] pr-[9px] mr-[5px] border-t border-r border-[#c6c7ca] text-[15px] text-[#666] shrink-0">
      <div className="flex w-[105px] overflow-hidden whitespace-nowrap mr-1 leading-6">
        <span className="-ml-[57px]">固定的 - 接地 至 Geom\输入</span>
      </div>
      <PanelControls />
    </div>
    <div className="flex flex-1 min-h-0 overflow-hidden">
      <table className="w-[169px] self-start table-fixed border-collapse bg-white text-sm leading-5 text-[#222]">
        <colgroup>
          <col className="w-[28px]" />
          <col />
        </colgroup>
        <tbody>
          {detailRows.map((row, i) => row.section ? (
            <tr key={i} className="h-[27px]"><td colSpan={2} className="border border-l-0 border-[#999]" /></tr>
          ) : (
            <tr key={i} className="h-[26px]">
              <td className="border border-l-0 border-[#999] p-0">
                <div className={clsx('flex justify-end overflow-hidden whitespace-nowrap', !row.cut && !row.wide && 'pr-[5px]', row.cut && 'pr-[10px]', row.wide && 'pr-5')}>{row.name}</div>
              </td>
              <td className="border border-[#999] pt-0 pb-[3px] pl-[3px] pr-0 align-middle">{row.value}</td>
            </tr>
          ))}
        </tbody>
      </table>
      <span className="w-[2px] h-[165px] mt-5 ml-[10px] bg-[#858585]" />
    </div>
  </aside>
);

/* ---------- graphics toolbar ---------- */

const Tool = ({ icon, label, active }) => (
  <button type="button" aria-label={label} className={clsx('w-7 h-7 flex items-center justify-center shrink-0', active && 'border border-[#4a9be0] bg-[#dfeaf5]')}>
    {icon}
  </button>
);

const Sep = () => <span className="w-px h-[26px] mx-[3px] bg-[#cfcfd3] shrink-0" />;

const TextTool = ({ icon, children }) => (
  <button type="button" className="flex items-center shrink-0 leading-6 whitespace-nowrap">
    <span className="w-7 flex justify-center">{icon}</span>
    {children}
    <Caret className="ml-[2px] text-gray-500" />
  </button>
);

const GraphicsToolbar = () => (
  <div className="flex items-center h-[35px] border-t border-[#c6c7ca] bg-[#ededf0] pb-[3px] text-[15px] overflow-hidden shrink-0">
    <span className="w-2 h-[22px] ml-3 mr-[7px] bg-[radial-gradient(#b0b0b4_1px,transparent_1px)] bg-[size:4px_4px] shrink-0" />
    <Tool icon={tools.back} label="上一视图" />
    <Tool icon={tools.forward} label="下一视图" />
    <Sep />
    <Tool icon={tools.cube} label="着色外表面和边" active />
    <Tool icon={tools.solid} label="着色外表面" />
    <Tool icon={tools.swap} label="切换显示" />
    <Sep />
    <Tool icon={tools.expand} label="展开" />
    <Tool icon={tools.collapse} label="折叠" />
    <Sep />
    <Tool icon={tools.rotate} label="旋转" />
    <Caret className="mx-[2px] text-gray-500" />
    <Tool icon={tools.pan} label="平移" />
    <Tool icon={tools.zoom} label="缩放" />
    <Tool icon={tools.zoomIn} label="框选缩放" />
    <Tool icon={tools.zoomFit} label="缩放至合适" />
    <Tool icon={tools.zoomSel} label="缩放至选择" />
    <Sep />
    <span className="ml-1 leading-6 shrink-0">选择</span>
    <span className="ml-[3px]"><TextTool icon={tools.mode}>模式</TextTool></span>
    <div className="flex ml-2 items-center">
      <Tool icon={tools.pickType} label="选择类型" />
      <Tool icon={tools.vertex} label="顶点" />
      <Tool icon={tools.edge} label="边" />
      <Tool icon={tools.face} label="面" />
      <Tool icon={tools.body} label="几何体" active />
      <Tool icon={tools.node} label="节点" />
      <Tool icon={tools.elemFace} label="单元面" />
      <Tool icon={tools.elem} label="单元" />
      <button type="button" className="w-[26px] h-7 pt-1 flex flex-col items-center shrink-0 text-[8px] leading-[10px] text-[#666] whitespace-nowrap">
        X Y Z
        <Svg size={12} box={12}><path d="M6 0l4 5-3 1v6l-3-5z" fill="#d9a520" /></Svg>
      </button>
      <Tool icon={tools.tag} label="标签" />
      <Tool icon={tools.label} label="注释标签" />
    </div>
    <Sep />
    <TextTool icon={tools.clipboard}>剪贴板</TextTool>
    <span className="ml-[14px] mr-2 leading-6 shrink-0">[ 空 ]</span>
    <Sep />
    <TextTool icon={tools.extend}>扩展</TextTool>
    <span className="ml-2"><TextTool icon={tools.pin}>选择依据</TextTool></span>
    <div className="ml-auto mr-[6px]"><Overflow /></div>
  </div>
);

/* ---------- 3D scene ---------- */

const dofs = ['X', 'Y', 'Z', 'RX', 'RY', 'RZ'];

const Scene = () => (
  <svg viewBox="196 213 1248 781" preserveAspectRatio="xMidYMid slice" className="absolute inset-0 w-full h-full" fill="none">
    {/* right hand link */}
    <path d="M1243 213h62l139 211v90z" fill="#8a98b0" fillOpacity=".3" />
    <path d="M1238 213l206 300M1244 213l200 291M1301 213l143 210M1308 213l136 199" stroke="#d6e3dc" strokeWidth="1.500" />
    <path d="M1241 213l203 295M1304 213l140 205" stroke="#7d93b5" strokeWidth="2.500" />
    {/* upper link */}
    <path d="M702 390L1015 213M737 432L1128 213" stroke="#d5dcf0" strokeWidth="2" />
    {/* crank */}
    <path d="M681 412q2-14 14-17h20q14 3 15 20l-6 130h-53z" fill="#9aa8c4" fillOpacity=".4" />
    {/* green bar */}
    <path d="M694 529l34 2 716 61v55L690 584c-12-3-21-14-21-29 0-14 10-25 25-26z" fill="#00c000" />
    <path d="M700 584L1444 647" stroke="#04640c" strokeWidth="3" strokeDasharray="4 1" />
    <path d="M672 565c4 12 12 18 30 19" stroke="#05500c" strokeWidth="3" />
    <path d="M728 531l716 61" stroke="#b9f5c0" strokeDasharray="2 2" />
    <path d="M688 545a13 13 0 0 1 19 19z" fill="#027a0a" />
    <circle cx="695" cy="556" r="11" fill="#a9bde6" />
    <path d="M684 553a11 11 0 0 0 20 9" stroke="#eef" strokeWidth="2" />
    <circle cx="697" cy="553" r="16" stroke="#b6e8b6" />
    <path d="M670 555c0 14 12 24 28 24 13 0 22-8 24-18" stroke="#c5eec5" strokeWidth="1.200" />
    <path d="M681 412l-10 143M730 415l-6 130M681 412q2-16 16-18M714 395q15 4 16 20" stroke="#dfe0dd" strokeWidth="1.200" />
    <circle cx="706" cy="421" r="25" stroke="#dfe3ea" strokeDasharray="100 60" strokeDashoffset="10" />
    <circle cx="706" cy="417" r="15" stroke="#dfe3ea" />
    <circle cx="702" cy="422" r="14" stroke="#dfe3ea" />
    <circle cx="705" cy="419" r="11" stroke="#e8eaf0" />
    {/* selection box */}
    <path d="M678 394L667 580M735 397l-12 185" stroke="#9a34b8" strokeWidth="4" strokeDasharray="2 2" />
    <path d="M732 397l-11 145M681 397l-10 140" stroke="#f0a8dc" strokeWidth="1.500" strokeDasharray="2 2" />
    <path d="M677 393l60 3" stroke="#8c4cd8" strokeWidth="5" strokeDasharray="2 2" />
    <path d="M665 580h8" stroke="#8c4cd8" strokeWidth="4" strokeDasharray="2 2" />
    <path d="M727 532l-3 49H690" stroke="#07450d" strokeWidth="4" strokeDasharray="2 2" />
    <path d="M662 545h14v16h-14z" fill="#f7ec00" />
    <path d="M669 546l-1 14M668 549h6" stroke="#3d3a00" strokeWidth="2" strokeDasharray="2 2" />
    <path d="M946 572v12M940 578h12" stroke="#5d8b9c" strokeWidth="1.200" />
    {/* joint frame */}
    <path d="M1119 620l-4 74" stroke="#0a0aa8" strokeWidth="3" />
    <path d="M1110 691h10l-5 24z" fill="#0a0a96" />
    <path d="M1119 620l-6 8" stroke="#a01010" strokeWidth="3" />
    <circle cx="1111.500" cy="629" r="4.500" fill="#e01010" />
    <path d="M1193 625h8v4h-8z" fill="#0a7a14" />
    <path d="M1201 627h12" stroke="#c8eec8" strokeWidth="2" />
    <text x="1217" y="627" fontSize="13" fill="#3fe04a">Y</text>
    <text x="1113" y="716" fontSize="13" fill="#1414c8">Z</text>
    {/* triad */}
    <path d="M1347 901l4-56" stroke="#0a8a14" strokeWidth="4" />
    <path d="M1344 847h14l-6-17z" fill="#0a7a14" />
    <path d="M1347 901l54 4" stroke="#c81414" strokeWidth="4" />
    <path d="M1400 899v14l19-6z" fill="#c81414" />
    <circle cx="1353" cy="894" r="7" fill="#0a0a96" />
    <circle cx="1386" cy="866" r="7.500" fill="#10b4b4" />
    <circle cx="1384" cy="863" r="3" fill="#5cd8d8" />
    <text x="1351" y="818" fontSize="13" fill="#14a01e">Y</text>
    <text x="1355" y="890" fontSize="13" fill="#1414c8">Z</text>
    <text x="1430" y="908" fontSize="13" fill="#d81414">X</text>
    {/* ruler */}
    <path d="M619.500 932.500h399v14h-399z" fill="#f4f7fd" stroke="#111" />
    <path d="M619 932h100v15H619zM818 932h101v15H818z" fill="#000" />
    <g fontSize="13" fill="#111">
      <text x="601" y="929">0.000</text>
      <text x="797" y="929">15.000</text>
      <text x="997" y="929">30.000 (mm)</text>
      <text x="701" y="967">7.500</text>
      <text x="897" y="967">22.500</text>
    </g>
    {/* pointer */}
    <path d="M701 467v22l5-5 5 9 3-2-4-8h6z" fill="#fff" stroke="#111" />
    <path d="M720 487l12-1 6 5v13h-13l-5-5z" fill="#000" stroke="#fff" />
    <path d="M720 487l5 5v12M725 492h13" stroke="#fff" />
  </svg>
);

const Logo = () => (
  <div className="absolute right-[10px] top-6 text-white flex flex-col items-end font-['Lato']">
    <div className="flex items-end h-[50px]">
      <svg width="40" height="35" viewBox="0 0 40 35" className="mb-[8px]" aria-hidden="true">
        <path d="M14 0h10L10 35H0zM21 9l6-8 13 34H30z" fill="#fff" />
      </svg>
      <span className="text-[50px] leading-[60px] h-[59px] font-black">nsys</span>
    </div>
    <span className="text-[22px] leading-7 -mt-[3px] font-black">2022 R1</span>
  </div>
);

const Viewport = () => {
  const [free, setFree] = useState({});
  return (
    <div className="relative flex-1 min-h-0 overflow-hidden bg-linear-to-b from-[#6a8bde] to-white">
      <Scene />
      <Logo />
      <div className="relative pt-[19px] pl-5 text-[13px] leading-5 text-black">
        <p className="text-sm leading-5 font-bold">固定的 - 接地 至 Geom\输入2</p>
        <p>2023/3/17 0:05</p>
        <div className="mt-5 flex flex-col gap-[3px]">
          {dofs.map((d) => (
            <label key={d} className="flex items-center gap-[5px] h-[22px]">
              <input
                type="checkbox"
                checked={!!free[d]}
                onChange={(e) => setFree({ ...free, [d]: e.target.checked })}
                className="appearance-none w-[22px] h-[22px] bg-[#cbcac8] border border-[#222] checked:bg-[#555]"
              />
              {d}
            </label>
          ))}
        </div>
      </div>
      <p className="absolute left-[45%] -ml-1 top-[296px] text-[44px] leading-[52px] font-medium text-[#dc1414] font-['Noto_Serif_CJK_SC','AR_PL_UMing_CN','Noto_Sans_CJK_SC',serif] whitespace-nowrap">小汪学知识</p>
    </div>
  );
};

const PanelTitle = ({ children }) => (
  <div className="flex items-center gap-[6px] h-7 pl-[5px] pb-[2px] border-t border-l border-[#c6c7ca] text-[15px] leading-6 text-[#555] shrink-0">
    {children}
    <Dots />
  </div>
);

const RightDock = () => (
  <aside className="flex flex-col w-[284px] shrink-0 pl-[5px] bg-[#ededf0]">
    <PanelTitle>参考几何体视图</PanelTitle>
    <div className="h-[378px] bg-[#7f7f7f] mb-[4px] shrink-0" />
    <PanelTitle>移动几何体视图</PanelTitle>
    <div className="relative flex-1 bg-linear-to-b from-[#6a8bde] to-white">
      <svg viewBox="1449 616 279 378" preserveAspectRatio="xMinYMin slice" className="absolute inset-0 w-full h-full" fill="none">
        <path d="M1478 781l250 22v20l-251-20a11 11 0 0 1 1-22z" fill="#00c000" />
        <path d="M1478 781l250 22" stroke="#3be04a" strokeWidth="2" strokeDasharray="2 2" />
        <path d="M1478 802.500l250 20" stroke="#0a6a14" strokeDasharray="2 2" />
        <circle cx="1477" cy="792" r="5" fill="#b4e6c0" stroke="#28d838" strokeWidth="2" />
        <path d="M1636 816l-6 88" stroke="#0a0aa8" strokeWidth="3" />
        <path d="M1624 901h11l-6 26z" fill="#0a0a96" />
        <path d="M1636 816l-9 10" stroke="#a01010" strokeWidth="3" />
        <circle cx="1625" cy="827" r="5.500" fill="#e01010" />
        <path d="M1723 820h5v6h-5z" fill="#0a8a14" />
        <text x="1627" y="930" fontSize="13" fill="#1414c8">Z</text>
        <path d="M1587 951h99v7h-99z" fill="#333" />
        <text x="1573" y="947" fontSize="13" fill="#111">0.00</text>
        <text x="1668" y="971" fontSize="13" fill="#111">20.00</text>
      </svg>
    </div>
  </aside>
);

const StatusBar = () => (
  <footer className="flex items-center h-[26px] bg-[#0078c8] text-[15px] leading-6 text-[#d4ebfa] whitespace-nowrap overflow-hidden shrink-0">
    <div className="ml-auto flex items-center w-[730px]">
      <Svg size={20} box={20}>
        <path d="M1 7h17v9H9l-4 4v-4H1z" fill="#f7dc86" />
        <circle cx="12" cy="7" r="6.500" fill="#1424c8" stroke="#fff" />
        <path d="M12 3v1.500M11 6.500h1V11M10.500 11h3" stroke="#fff" strokeWidth="1.500" />
      </Svg>
      <span className="w-[68px] pl-[2px] shrink-0">2 消息</span>
      <span className="w-[264px] shrink-0">选择1 几何体: 体积 = 532.57 mm³</span>
      <svg width="10" height="8" viewBox="0 0 10 8" className="mr-[6px] mb-1 shrink-0" aria-hidden="true"><path d="M5 0l5 8H0z" fill="#fff" /></svg>
      <span className="w-[299px] shrink-0">度量标准（mm、kg、N、s、mV、mA）</span>
      <span className="w-[51px] shrink-0">弧度</span>
      <span>RPM</span>
    </div>
  </footer>
);

/* ---------- desktop taskbar ---------- */

const DarkTile = ({ text, children }) => (
  <svg width="30" height="30" viewBox="0 0 30 30" fill="none" aria-hidden="true">
    <path d="M0 0h30v30H0z" fill="#050505" />
    {children}
    <text x="15" y="29" fontSize="12" fontWeight="bold" fill="#fff" textAnchor="middle">{text}</text>
  </svg>
);

const apps = [
  { name: '任务视图', icon: <Svg size={30} box={30}><path d="M0 6h22v22H0z" fill="#2b2b2b" /><path d="M8 1h22v20H8z" fill="#f4f4f4" fillOpacity=".8" /></Svg> },
  { name: '文件资源管理器', running: true, icon: <Svg size={30} box={30}><path d="M0 4q0-2 2-2h9l3 4h14q2 0 2 2v19q0 1-1 1H1q-1 0-1-1z" fill="#e8a317" /><path d="M0 9h30v18q0 1-1 1H1q-1 0-1-1z" fill="#ffd34d" /><path d="M5 28v-5q0-2 2-2h16q2 0 2 2v5z" fill="#1c7cd6" /><path d="M10 25h10v3H10z" fill="#0d5397" /></Svg> },
  { name: 'Edge', running: true, icon: (
    <Svg size={30} box={30}>
      <defs>
        <linearGradient id="edgeTop" x1="0" y1="0" x2="1" y2="1"><stop offset="0" stopColor="#28a4e8" /><stop offset="1" stopColor="#57d65a" /></linearGradient>
      </defs>
      <circle cx="15" cy="15" r="15" fill="#1470c4" />
      <path d="M0 14C1 5 7 0 15 0c9 0 15 6 15 13 0 5-4 8-8 8-3 0-5-1-4-3 3-4 0-9-6-9S2 11 0 14z" fill="url(#edgeTop)" />
      <path d="M12 13c-4 7 2 15 14 12-2 3-7 5-11 5C7 29 3 20 12 13z" fill="#0c4a9c" />
      <path d="M14 14c-2 3 0 8 8 8 3 0 5-1 7-3l-2 6c-8 3-18-3-13-11z" fill="#d7eef0" />
    </Svg>
  ) },
  { name: '百度', icon: <Svg size={30} box={30}><path d="M0 0h30v30H0z" fill="#f5f6f8" /><ellipse cx="11" cy="6" rx="3" ry="4" fill="#1b5fc4" /><ellipse cx="19" cy="6" rx="3" ry="4" fill="#1b5fc4" /><ellipse cx="6" cy="13" rx="2.500" ry="3.500" fill="#1b5fc4" /><ellipse cx="24" cy="13" rx="2.500" ry="3.500" fill="#1b5fc4" /><path d="M15 11c4 0 4 4 7 7s1 7-3 7h-8c-4 0-6-4-3-7s3-7 7-7z" fill="#1b5fc4" /><text x="15" y="23" fontSize="9" fill="#fff" textAnchor="middle">du</text><path d="M9 28h6v2H9z" fill="#d22" /><path d="M15 28h6v2h-6z" fill="#1b5fc4" /></Svg> },
  { name: 'hao123', icon: <Svg size={30} box={30}><path d="M0 0h30v30H0z" fill="#fff" /><text x="15" y="14" fontSize="12" fontWeight="bold" fill="#2fa84f" textAnchor="middle">hảo</text><text x="15" y="24" fontSize="10" fontWeight="bold" fill="#f08a1c" textAnchor="middle">123</text></Svg> },
  { name: 'SolidWorks', running: true, icon: <Svg size={30} box={30}><path d="M1 5l14-5 14 4v22l-14 4-14-5z" fill="#c4161c" /><path d="M1 5l14 3 14-4M15 8v22" stroke="#7d0c10" /><path d="M15 8l14-4v22l-14 4z" fill="#9e1015" /><text x="15" y="20" fontSize="14" fontWeight="bold" fill="#fff" textAnchor="middle">SW</text><path d="M12 21h17v8H12z" fill="#222" /><text x="21" y="28" fontSize="8" fontWeight="bold" fill="#fff" textAnchor="middle">2021</text></Svg> },
  { name: 'Workbench', running: true, icon: <DarkTile text="WB"><path d="M15 1l4 2v5l-4 2-4-2V3zM10 9l4 2v5l-4 2-4-2v-5zM20 9l4 2v5l-4 2-4-2v-5zM11 3l4 2 4-2M15 5v5M6 11l4 2 4-2M10 13v5M16 11l4 2 4-2M20 13v5" stroke="#f0a818" strokeWidth="1.300" /></DarkTile> },
  { name: '播放器', running: true, icon: <Svg size={30} box={30}><circle cx="15" cy="15" r="14" fill="#3a3a40" stroke="#e88a3c" strokeWidth="2" /><path d="M28 10a14 14 0 0 1-21 16" stroke="#7a5cc0" strokeWidth="2" /><path d="M11 8l11 7-11 7z" fill="#fff" /></Svg> },
  { name: 'SpaceClaim', running: true, icon: <DarkTile text="SC"><path d="M8 2l16 8-16 9zM12 7l6 3-6 4z" stroke="#f0a818" strokeWidth="2" /></DarkTile> },
  { name: 'Mechanical', active: true, icon: <DarkTile text="M"><circle cx="11" cy="14" r="4" stroke="#f0a818" strokeWidth="2" /><circle cx="11" cy="14" r="5.500" stroke="#f0a818" strokeWidth="1.500" strokeDasharray="2 2.300" /><circle cx="21" cy="5" r="3" stroke="#f0a818" strokeWidth="1.500" /><circle cx="21" cy="5" r="4.200" stroke="#f0a818" strokeWidth="1.200" strokeDasharray="2 2" /></DarkTile> },
];

const Taskbar = () => (
  <nav className="relative flex items-center h-[60px] shrink-0 bg-[linear-gradient(to_right,#d3f2ee_0%,#cdf0e4_14%,#c8f3dc_30%,#dcdcd4_38%,#c9e8e2_48%,#c8e6ea_58%,#d2f0d6_68%,#c3ecdc_78%,#c4e8e4_86%,#ecdcd0_93%,#dfe6da_100%)]">
    <div className="flex items-center ml-[508px]">
      <button type="button" aria-label="开始">
        <Svg size={30} box={30}><path d="M0 1h14v14H0zM15.500 1H30v14H15.500zM0 16h14v14H0zM15.500 16H30v14H15.500z" fill="#1486dc" /><path d="M0 1h14v14H0z" fill="#3aa8ee" /></Svg>
      </button>
      <button type="button" className="flex items-center justify-center gap-[6px] ml-[18px] w-[123px] h-[38px] rounded-full bg-[#eff5ef] text-[15px] leading-6">
        <Svg size={18} box={18}><circle cx="11" cy="7" r="5.500" stroke="#222" strokeWidth="1.600" /><path d="M7 11l-5 6" stroke="#222" strokeWidth="2" /></Svg>
        搜索
      </button>
      <div className="flex ml-[9px] gap-[7px]">
        {apps.map((app) => (
          <button
            key={app.name}
            type="button"
            aria-label={app.name}
            className={clsx('relative w-12 h-12 flex items-center justify-center rounded-md', app.active && 'bg-white/60')}
          >
            {app.icon}
            {app.running && <span className="absolute bottom-0 w-2 h-1 rounded-full bg-[#6f8580]" />}
            {app.active && <span className="absolute bottom-0 w-5 h-1 rounded-full bg-[#0f6cbd]" />}
          </button>
        ))}
      </div>
    </div>
    <div className="flex items-center ml-auto text-[#222]">
      <ChevronUp size={24} strokeWidth={1.5} className="mr-[8px]" />
      <Svg size={20} box={20} className="mr-[10px]">
        {[0, 60, 120, 180, 240, 300].map((a) => <path key={a} d="M10 9C5 7 6 1 11 1c3 0 4 3 2 5" stroke="#e0606c" strokeWidth="1.400" transform={`rotate(${a} 10 10)`} />)}
      </Svg>
      <Svg size={20} box={20} className="mr-[10px]">
        <circle cx="10" cy="10" r="9" fill="#f6d820" />
        <path d="M1 9a9 9 0 0 1 15-6M19 11a9 9 0 0 1-15 6" stroke="#1fa83c" strokeWidth="3" />
        <path d="M6 10h8M10 6v8" stroke="#128a2c" strokeWidth="2" />
      </Svg>
      <Svg size={22} box={22} className="mr-[14px]">
        <path d="M2 10C3 2 14-1 18 6M19 1v6h-6M3 20v-5h5M3 15c1 3 3 5 6 5" stroke="#222" strokeWidth="1.500" />
        <circle cx="16" cy="16" r="5" fill="#1374d4" />
      </Svg>
      <Mic size={20} strokeWidth={1.5} color="#1d5fa8" className="mr-5" />
      <button type="button" className="w-[18px] text-[18px] leading-6 mr-[23px]">中</button>
      <Wifi size={20} strokeWidth={1.8} className="mr-[9px]" />
      <Volume2 size={20} strokeWidth={1.5} className="mr-[10px]" />
      <Svg size={20} box={20} className="mr-5"><path d="M6 6h11v10H5v-4" stroke="#222" strokeWidth="1.600" /><path d="M8 8h7v6H8z" fill="#222" /><path d="M18 9h2v4h-2zM1 4h6v4q0 2-3 2T1 8zM2 1h1v3H2zM5 1h1v3H5zM3 10h2v3H3z" fill="#222" /></Svg>
      <time className="w-[25px] overflow-hidden whitespace-nowrap text-sm leading-5 pt-5">2023/3/17</time>
    </div>
  </nav>
);

const App = () => (
  <div className="flex flex-col h-screen overflow-hidden text-[#222] font-['Noto_Sans','Noto_Sans_CJK_SC',sans-serif]">
    <TitleBar />
    <Ribbon />
    <main className="flex flex-1 min-h-0">
      <LeftDock />
      <div className="flex flex-col flex-1 min-w-0">
        <GraphicsToolbar />
        <Viewport />
      </div>
      <RightDock />
    </main>
    <StatusBar />
    <Taskbar />
  </div>
);

export default App;
